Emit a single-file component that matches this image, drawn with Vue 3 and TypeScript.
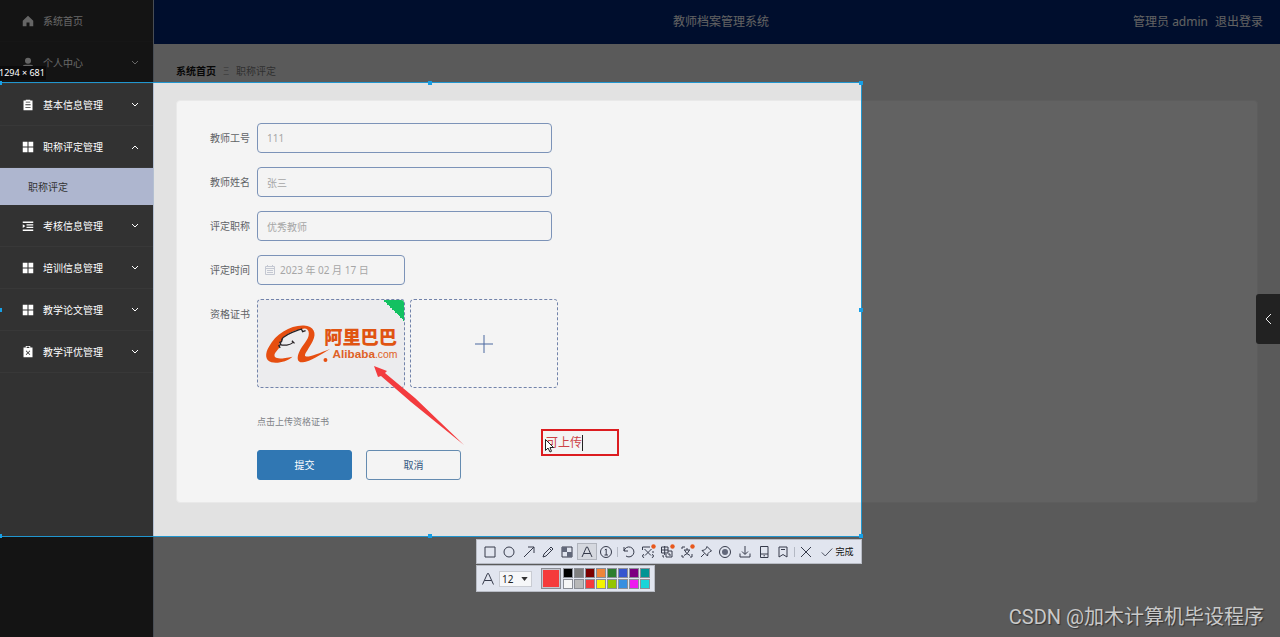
<script setup lang="ts">
import { ref } from 'vue'

interface MenuItem {
  label: string
  icon: string
  arrow: 'down' | 'up' | ''
  child?: string
}
interface Tool {
  name: string
  d: string
  fill?: string
  dot?: boolean
  active?: boolean
}

const icons: Record<string, string> = {
  home: 'M8 1 15 7.500V15H10V10H6V15H1V7.500Z',
  user: 'M8 1a4 4 0 1 1 0 8A4 4 0 0 1 8 1ZM1 15v-2c0-1.600 1.200-2.600 3-2.600h8c1.800 0 3 1 3 2.600v2Z',
  clip: 'M5 2V1h6v1h3v13H2V2ZM5 3.500v1.200h6V3.500ZM4.500 7v1.200h7V7ZM4.500 10.500v1.200h7v-1.200Z',
  grid: 'M1 1h6.300v6.200H1ZM8.700 1H15v6.200H8.700ZM1 8.800h6.300V15H1ZM8.700 8.800H15V15H8.700Z',
  list: 'M1 2h14v2H1ZM6 5.500h9v1.800H6ZM6 9h9v1.800H6ZM1 12.500h14v2H1ZM1 5.500l3.500 2.600L1 10.800Z',
  clipx: 'M5 2V0h6v2h3v13H2V2ZM6.200 1v1.500h3.600V1ZM5.800 6 5 6.800 7.200 9 5 11.200l.8.8L8 9.800l2.200 2.200.8-.8L8.800 9 11 6.800l-.8-.8L8 8.200Z'
}

const menu: MenuItem[] = [
  { label: '系统首页', icon: 'home', arrow: '' },
  { label: '个人中心', icon: 'user', arrow: 'down' },
  { label: '基本信息管理', icon: 'clip', arrow: 'down' },
  { label: '职称评定管理', icon: 'grid', arrow: 'up', child: '职称评定' },
  { label: '考核信息管理', icon: 'list', arrow: 'down' },
  { label: '培训信息管理', icon: 'grid', arrow: 'down' },
  { label: '教学论文管理', icon: 'grid', arrow: 'down' },
  { label: '教学评优管理', icon: 'clipx', arrow: 'down' }
]

const fields = ref([
  { id: 'no', label: '教师工号', value: '111' },
  { id: 'name', label: '教师姓名', value: '张三' },
  { id: 'title', label: '评定职称', value: '优秀教师' }
])
const date = ref('2023 年 02 月 17 日')
const note = ref('可上传')
const size = ref('12')

const shapeTools: Tool[] = [
  { name: '矩形', d: 'M3 3H13V13H3Z' },
  { name: '椭圆', d: 'M8 3a5 5 0 1 1 0 10A5 5 0 0 1 8 3Z' },
  { name: '箭头', d: 'M3 13 13 3M7 3H13V9' },
  { name: '画笔', d: 'M3 13 4 10 11 3 13 5 6 12ZM9.500 4.500 11.500 6.500' },
  { name: '马赛克', d: 'M3 3H13V13H3Z', fill: 'M3 3H8V8H3ZM8 8H13V13H8Z' },
  { name: '文字', d: 'M3 13 7.500 3H8.500L13 13M5 9.500H11', active: true },
  { name: '序号', d: 'M8 2.500a5.500 5.500 0 1 1 0 11A5.500 5.500 0 0 1 8 2.500ZM6.800 6 8.200 5V11M6.500 11H10' }
]
const actionTools: Tool[] = [
  { name: '撤销', d: 'M3 3V7H7M3 7A5 5 0 1 1 5 12' },
  { name: '裁剪', d: 'M2.500 6V3H10M4.500 5 11 11.500M11.500 5 5 11.500M13 7V9M4 10.500a1.500 1.500 0 1 0 .1 3M12 10.500a1.500 1.500 0 1 1-.1 3', dot: true },
  { name: '翻译', d: 'M2.500 3H9V9H2.500ZM2.500 6H9M5.700 2V11M9 7H13V13H7V10M9 10H11V12M4 11V13H5', dot: true },
  { name: '文字识别', d: 'M3 5V3H6M3 11V13H5M13 10V13H11M5 6H11M8 4V6M10.500 6Q9 10 5 11.500M5.500 6Q7 10 11 11.500', dot: true },
  { name: '钉住', d: 'M9 2.500 13.500 7 12 7.500 10 9.500 9.500 12 4 6.500 6.500 6 8.500 4ZM6.500 9.500 3 13' },
  { name: '录屏', d: 'M8 2.500a5.500 5.500 0 1 1 0 11A5.500 5.500 0 0 1 8 2.500Z', fill: 'M8 5a3 3 0 1 1 0 6A3 3 0 0 1 8 5Z' },
  { name: '保存', d: 'M8 2V10M5 7.500 8 10.500 11 7.500M3 9.500V13H13V9.500' },
  { name: '发送到手机', d: 'M4.500 2.500H12V13.500H4.500ZM4.500 10H12M7.500 11.800H9' },
  { name: '收藏', d: 'M4 3H12V13L8 10.500 4 13ZM6 5.500H10' }
]
const swatches = [
  '#000000', '#7f7f7f', '#7b0000', '#f0853a', '#2e7d2e', '#3655cf', '#7c0080', '#009494',
  '#f6f6f6', '#b8b8b8', '#f53b3b', '#f4f400', '#94c400', '#378fe0', '#ee1aee', '#18d4d8'
]
</script>

<template>
  <div class="page">
    <aside class="sidebar">
      <nav>
        <template v-for="m in menu" :key="m.label">
          <button class="item" type="button">
            <svg class="ico" viewBox="0 0 16 16"><path :d="icons[m.icon]" fill-rule="evenodd" /></svg>
            <span>{{ m.label }}</span>
            <svg v-if="m.arrow" class="chev" :class="m.arrow" viewBox="0 0 8 8"><path d="M1 2 4 5 7 2" /></svg>
          </button>
          <a v-if="m.child" class="sub" href="#">{{ m.child }}</a>
        </template>
      </nav>
    </aside>

    <div class="body">
      <header class="top">
        <h1>教师档案管理系统</h1>
        <div class="account"><span>管理员 admin</span><a href="#">退出登录</a></div>
      </header>
      <main>
        <div class="crumbs"><a href="#">系统首页</a><span class="sep">Ξ</span><span>职称评定</span></div>
        <form class="card" @submit.prevent>
          <div v-for="f in fields" :key="f.id" class="row">
            <label :for="f.id">{{ f.label }}</label>
            <input :id="f.id" v-model="f.value" class="text" readonly>
          </div>
          <div class="row">
            <label for="date">评定时间</label>
            <div class="date">
              <svg viewBox="0 0 10 10"><path d="M.5 1.500H9.500V9.500H.5ZM.5 3.500H9.500M2.500 0V2M7.500 0V2M2 5.500H8M2 7.500H8" /></svg>
              <input id="date" v-model="date" readonly>
            </div>
          </div>
          <div class="row upload">
            <label for="add">资格证书</label>
            <div class="tiles">
              <div class="tile pic">
                <svg viewBox="6 12 444 267" role="img" aria-label="阿里巴巴">
                  <path class="brand" d="M110 186C95 200 65 208 45 203C25 198 25 175 38 155C58 115 105 88 145 90C175 92 185 112 172 138C160 162 150 172 148 182C150 192 185 178 225 162C195 180 165 200 142 203C125 205 122 190 130 172C140 150 160 135 160 115C160 100 148 97 138 102C115 104 95 115 78 130C80 140 70 142 68 150C74 158 62 165 55 178C52 192 65 196 110 186Z" />
                  <path class="line" d="M76 134C84 118 118 108 137 101L141 109 150 106M79 130 76 140 71 142 74 148 68 152 72 159M70 148C84 153 102 151 112 142M108 137 116 145" />
                  <circle class="brand" cx="211" cy="196" r="6" />
                  <text class="cn" x="207" y="147">阿里巴巴</text>
                  <text class="en" x="233" y="190">Alibaba<tspan class="com">.com</tspan></text>
                </svg>
                <i class="corner"></i>
              </div>
              <button id="add" class="tile add" type="button" aria-label="上传">
                <svg viewBox="0 0 20 20"><path d="M10 1V19M1 10H19" /></svg>
              </button>
            </div>
          </div>
          <p class="tip">点击上传资格证书</p>
          <div class="actions">
            <button class="primary" type="submit">提交</button>
            <button type="button">取消</button>
          </div>
        </form>
      </main>
    </div>

    <div class="selection">
      <i class="h tl"></i><i class="h tm"></i><i class="h tr"></i><i class="h ml"></i>
      <i class="h mr"></i><i class="h bl"></i><i class="h bm"></i><i class="h br"></i>
      <span class="dims">1294 × 681</span>
      <svg class="arrow" viewBox="0 0 92 82"><path d="M1 1 14 6 12 8 42 33 91 80 38 37 8 11 5 12Z" /></svg>
      <div class="note">
        <input v-model="note" aria-label="批注"><i class="caret"></i>
        <svg class="mouse" viewBox="0 0 9 14"><path d="M.5.5V11.500L3 9 5 13 6.500 12.300 5 8.500H8.500Z" /></svg>
      </div>
      <div class="bars">
        <div class="bar tools">
          <div class="group shapes">
            <button v-for="t in shapeTools" :key="t.name" type="button" :aria-label="t.name" :class="{ active: t.active }">
              <svg viewBox="0 0 16 16"><path :d="t.d" /><path v-if="t.fill" class="solid" :d="t.fill" /></svg>
            </button>
          </div>
          <i class="rule"></i>
          <div class="group acts">
            <button v-for="t in actionTools" :key="t.name" type="button" :aria-label="t.name">
              <svg viewBox="0 0 16 16"><path :d="t.d" /><path v-if="t.fill" class="solid" :d="t.fill" /><circle v-if="t.dot" cx="13.500" cy="2.500" r="2.200" /></svg>
            </button>
          </div>
          <i class="rule"></i>
          <div class="group end">
            <button type="button" aria-label="关闭"><svg viewBox="0 0 16 16"><path d="M3 3 13 13M13 3 3 13" /></svg></button>
            <button class="done" type="button"><svg viewBox="0 0 16 16"><path d="M2 8.500 6 12.500 14 4" /></svg>完成</button>
          </div>
        </div>
        <div class="bar style">
          <svg class="bigA" viewBox="0 0 16 16"><path d="M2.500 13.500 7.500 2.500H8.500L13.500 13.500M4.500 9.500H11.500" /></svg>
          <div class="size">
            <select v-model="size" aria-label="字号"><option>12</option></select>
            <svg viewBox="0 0 8 5"><path d="M0 0H8L4 5Z" /></svg>
          </div>
          <i class="current"></i>
          <div class="palette">
            <button v-for="c in swatches" :key="c" type="button" :aria-label="c" :style="{ background: c }"></button>
          </div>
        </div>
      </div>
    </div>

    <button class="drawer" type="button" aria-label="展开"><svg viewBox="0 0 8 12"><path d="M7 1 2 6 7 11" /></svg></button>
    <div class="mark">CSDN @加木计算机毕设程序</div>
  </div>
</template>

<style>
body { margin: 0; }
</style>

<style scoped>
* { box-sizing: border-box; }
.page {
  position: relative;
  display: flex;
  min-height: 100vh;
  overflow: hidden;
  background: #e2e2e2;
  font: 10px/16px "Noto Sans", "Noto Sans CJK SC", sans-serif;
  color: #606266;
}
button, input, select { font: inherit; color: inherit; margin: 0; padding: 0; border: 0; background: none; outline: 0; }
a { color: inherit; text-decoration: none; }
svg { display: block; flex: none; fill: none; stroke: currentColor; }

.sidebar { flex: none; width: 154px; background: #323232; border-right: 1px solid #b4c0d2; }
.item {
  display: flex;
  align-items: center;
  width: 100%;
  height: 42px;
  padding: 0 14px 0 22px;
  color: #fff;
  border-bottom: 1px solid #383838;
}
.ico { width: 12px; height: 12px; margin-right: 9px; fill: #fff; stroke: none; }
.chev { width: 8px; height: 8px; margin-left: auto; }
.chev.up { transform: rotate(180deg); }
.sub { display: flex; align-items: center; height: 37px; padding-left: 28px; background: #aeb6cf; color: #333; }

.body { flex: 1; min-width: 0; }
.top { display: flex; align-items: center; height: 44px; padding: 0 17px 0 0; background: #002370; color: #f4f4f4; font-size: 12px; }
.top h1 { flex: 1; margin: 0; padding-left: 155px; font: inherit; text-align: center; }
.account { display: flex; gap: 7px; }
main { padding: 19px 22px 0; }
.crumbs { display: flex; height: 37px; color: #777; }
.crumbs a { color: #111; font-weight: 700; }
.crumbs .sep { width: 20px; text-align: center; color: #aaa; }

.card { padding: 22px 31px; background: #f4f4f4; border: 1px solid #e9e9e9; border-radius: 4px; }
.row { display: flex; margin-bottom: 14px; }
.row > label { flex: none; width: 42px; margin-right: 7px; line-height: 30px; white-space: nowrap; text-align: right; }
.text, .date { height: 30px; border: 1px solid #7c93b8; border-radius: 4px; color: #a6a6a6; }
.text { width: 295px; padding: 0 9px; }
.date { display: flex; align-items: center; gap: 5px; width: 148px; padding: 0 7px; }
.date svg { width: 10px; height: 10px; color: #c4c8d2; }
.date input { flex: 1; min-width: 0; }
.tiles { display: flex; gap: 5px; }
.tile { position: relative; width: 148px; height: 89px; border: 1px dashed #7283aa; border-radius: 4px; overflow: hidden; }
.pic { background: #ececee; }
.pic svg { width: 146px; height: 87px; stroke: none; }
.brand { fill: #e64e10; }
.pic .line { stroke: #282326; stroke-width: 4; }
.cn { fill: #e05412; font: 900 56px "Noto Sans CJK SC", sans-serif; }
.en { fill: #df6126; font: 700 36px "Liberation Sans", sans-serif; }
.com { font-weight: 400; font-size: 32px; }
.corner { position: absolute; top: 0; right: 0; width: 21px; height: 21px; background: linear-gradient(45deg, transparent 50%, #13c161 50%); }
.add { display: flex; align-items: center; justify-content: center; color: #4a699f; }
.add svg { width: 20px; height: 20px; }
.tip { margin: 26px 0 20px 49px; font-size: 9px; line-height: 16px; color: #808388; }
.actions { display: flex; gap: 14px; margin-left: 49px; }
.actions button { width: 95px; height: 30px; border: 1px solid #648bb0; border-radius: 3px; color: #34577f; }
.actions .primary { border-color: #3077b3; background: #3077b3; color: #fff; }

.selection { position: absolute; left: 0; top: 82px; width: 862px; height: 455px; border: 1px solid #2196cf; border-left: 0; box-shadow: 0 0 0 2000px rgba(0, 0, 0, .6); }
.h { position: absolute; width: 4px; height: 4px; background: #169fe6; }
.tl, .tm, .tr { top: -2px; }
.bl, .bm, .br { bottom: -2px; }
.tl, .ml, .bl { left: -2px; }
.tr, .mr, .br { right: -2px; }
.tm, .bm { left: 428px; }
.ml, .mr { top: 225px; }
.dims { position: absolute; left: -1px; top: -17px; padding: 0 1px 0 0; background: #0b0b0c; color: #fff; font: 9px/14px "Noto Sans", sans-serif; white-space: nowrap; }
.arrow { position: absolute; left: 373px; top: 282px; width: 92px; height: 82px; fill: #f33b3e; stroke: none; }
.note { position: absolute; left: 541px; top: 346px; display: flex; align-items: center; width: 78px; height: 27px; padding-left: 3px; border: 2px solid #dc1c20; color: #cc4347; font-size: 12px; }
.note input { width: 36px; }
.caret { width: 1px; height: 16px; background: #222; }
.mouse { position: absolute; left: 2px; top: 8px; width: 9px; height: 14px; fill: #fff; stroke: #222; }

.bars { position: absolute; top: 456px; right: -1px; width: 386px; color: #363b4b; }
.bar { display: flex; align-items: center; background: #e1e5ef; border: 1px solid #b8bcc5; }
.tools { height: 25px; padding: 0 3px; }
.group { display: flex; align-items: center; }
.group button { display: flex; flex: 1; align-items: center; justify-content: center; height: 17px; }
.group svg { width: 16px; height: 16px; }
.shapes { width: 136px; }
.acts { width: 174px; }
.end { flex: 1; }
.rule { width: 1px; height: 10px; margin: 0 1px; background: #b4b9c4; }
.group .active { background: #d5d8df; box-shadow: inset 0 0 0 1px #b0b4bd; }
.solid { fill: #62687a; stroke: none; }
.group circle { fill: #e8581c; stroke: none; }
.group .done { flex: none; gap: 1px; width: 42px; color: #111; font-size: 9px; }
.group .done svg { width: 14px; color: #363b4b; }
.style { width: 179px; height: 27px; margin-top: 1px; padding: 0 4px 0 3px; }
.bigA { width: 16px; height: 16px; }
.size { position: relative; width: 34px; height: 16px; margin-left: 3px; background: #f6f7f9; border: 1px solid #c9ccd3; }
.size select { display: block; width: 100%; height: 14px; padding-left: 2px; appearance: none; line-height: 14px; color: #222; }
.size svg { position: absolute; right: 3px; top: 5px; width: 7px; height: 4px; fill: #333; stroke: none; pointer-events: none; }
.current { width: 21px; height: 21px; margin: 0 2px 0 9px; background: #f53b3b; border: 1px solid #8a8d94; outline: 1px solid #c4c7ce; outline-offset: -2px; }
.palette { display: grid; grid-template-columns: repeat(8, 10px); gap: 1px; }
.palette button { height: 10px; border: 1px solid #8b8e96; }

.drawer { position: absolute; right: 0; top: 294px; display: flex; align-items: center; justify-content: center; width: 24px; height: 50px; background: #222; border-radius: 3px 0 0 3px; color: #eee; }
.drawer svg { width: 8px; height: 12px; }
.mark { position: absolute; right: 16px; bottom: 5px; color: #c9c9c9; font-family: Roboto, "Noto Sans CJK SC", sans-serif; font-size: 20px; line-height: 30px; text-shadow: 1px 1px 1px #333; white-space: nowrap; }
</style>
